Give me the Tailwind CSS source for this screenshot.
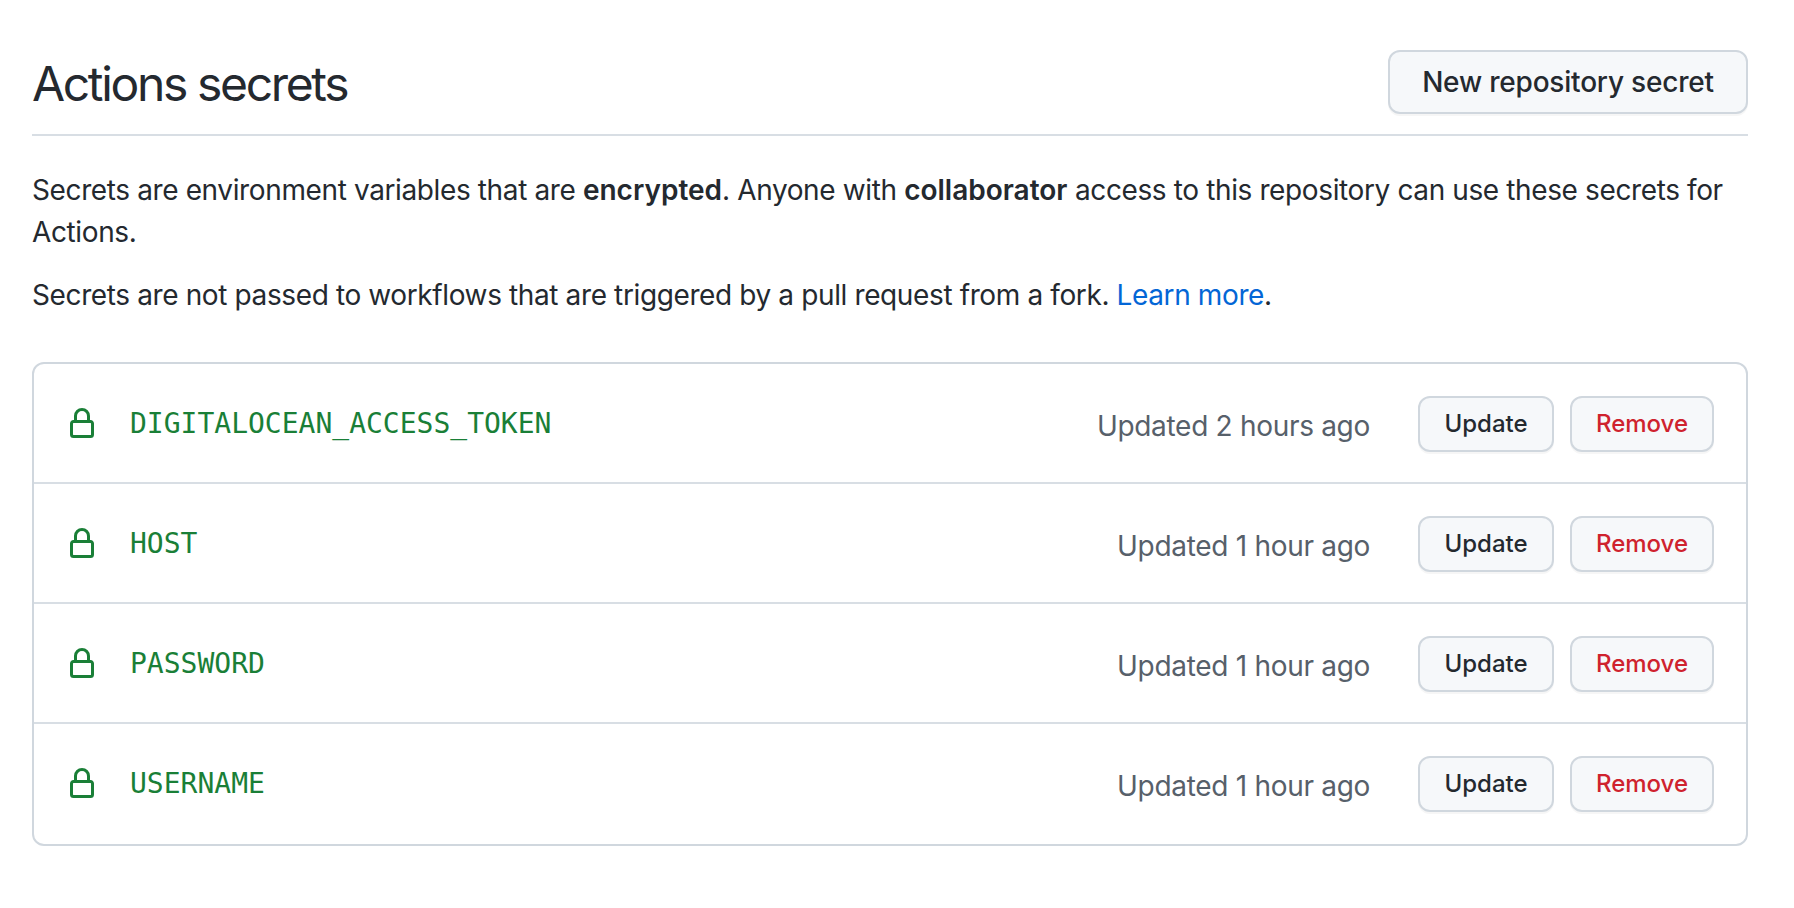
<!DOCTYPE html>
<html lang="en">

<head>
  <meta charset="UTF-8">
  <meta name="viewport" content="width=device-width, initial-scale=1.0">
  <title>Actions secrets</title>
  <script src="https://cdn.jsdelivr.net/npm/@tailwindcss/browser@4"></script>
</head>

<body class="min-h-screen bg-white text-[#24292f] font-['Inter','Liberation_Sans',sans-serif]">

  <div class="pl-[32px] pr-[46px] pt-[50px]">
    <!-- header -->
    <div class="flex justify-between items-start h-[86px] border-b-2 border-[#d8dee4]">
      <h1 class="text-[48px] leading-[68px] font-normal tracking-[-2.35px]">Actions secrets</h1>
      <button class="w-[360px] h-[64px] rounded-[12px] border-2 border-[#d0d7de] bg-[#f6f8fa] text-[28px] font-medium tracking-[-0.2px] shadow-[0_2px_0_rgba(27,31,36,0.04)]">New repository secret</button>
    </div>

    <p class="mt-[33px] text-[28px] leading-[42px] tracking-[-0.38px]">Secrets are environment variables that are <b class="font-semibold tracking-[0px]">encrypted</b>. Anyone with <b class="font-semibold tracking-[0px]">collaborator</b> access to this repository can use these secrets for Actions.</p>
    <p class="mt-[21px] text-[28px] leading-[42px] tracking-[-0.38px]">Secrets are not passed to workflows that are triggered by a pull request from a fork. <a href="#" class="text-[#0366d6]">Learn more</a>.</p>

    <!-- secrets list -->
    <div class="mt-[46px] rounded-[12px] border-2 border-[#d0d7de] divide-y-2 divide-[#d8dee4]">
      <div class="flex items-center pt-[32px] pb-[30px] px-[32px]">
        <svg class="w-[32px] h-[32px] text-[#1a7f37] shrink-0" viewBox="0 0 16 16" fill="currentColor"><path d="M4 4a4 4 0 0 1 8 0v2h.25c.966 0 1.75.784 1.75 1.75v5.5A1.75 1.75 0 0 1 12.25 15h-8.5A1.75 1.75 0 0 1 2 13.25v-5.5C2 6.784 2.784 6 3.75 6H4Zm6.5 2V4a2.5 2.5 0 1 0-5 0v2ZM3.5 7.75v5.5c0 .138.112.25.25.25h8.5a.25.25 0 0 0 .25-.25v-5.5a.25.25 0 0 0-.25-.25h-8.5a.25.25 0 0 0-.25.25Z"/></svg>
        <span class="ml-[32px] font-['DejaVu_Sans_Mono',monospace] text-[28px] text-[#1a7f37]">DIGITALOCEAN_ACCESS_TOKEN</span>
        <span class="ml-auto mr-[48px] text-[28px] text-[#57606a] mt-[4px] tracking-[-0.3px]">Updated 2 hours ago</span>
        <button class="w-[136px] h-[56px] rounded-[12px] border-2 border-[#d0d7de] bg-[#f6f8fa] text-[24px] font-medium shadow-[0_2px_0_rgba(27,31,36,0.04)]">Update</button>
        <button class="ml-[16px] w-[144px] h-[56px] rounded-[12px] border-2 border-[#d0d7de] bg-[#f6f8fa] text-[24px] font-medium text-[#cf222e] shadow-[0_2px_0_rgba(27,31,36,0.04)]">Remove</button>
      </div>
      <div class="flex items-center pt-[32px] pb-[30px] px-[32px]">
        <svg class="w-[32px] h-[32px] text-[#1a7f37] shrink-0" viewBox="0 0 16 16" fill="currentColor"><path d="M4 4a4 4 0 0 1 8 0v2h.25c.966 0 1.75.784 1.75 1.75v5.5A1.75 1.75 0 0 1 12.25 15h-8.5A1.75 1.75 0 0 1 2 13.25v-5.5C2 6.784 2.784 6 3.75 6H4Zm6.5 2V4a2.5 2.5 0 1 0-5 0v2ZM3.5 7.75v5.5c0 .138.112.25.25.25h8.5a.25.25 0 0 0 .25-.25v-5.5a.25.25 0 0 0-.25-.25h-8.5a.25.25 0 0 0-.25.25Z"/></svg>
        <span class="ml-[32px] font-['DejaVu_Sans_Mono',monospace] text-[28px] text-[#1a7f37]">HOST</span>
        <span class="ml-auto mr-[48px] text-[28px] text-[#57606a] mt-[4px] tracking-[-0.3px]">Updated 1 hour ago</span>
        <button class="w-[136px] h-[56px] rounded-[12px] border-2 border-[#d0d7de] bg-[#f6f8fa] text-[24px] font-medium shadow-[0_2px_0_rgba(27,31,36,0.04)]">Update</button>
        <button class="ml-[16px] w-[144px] h-[56px] rounded-[12px] border-2 border-[#d0d7de] bg-[#f6f8fa] text-[24px] font-medium text-[#cf222e] shadow-[0_2px_0_rgba(27,31,36,0.04)]">Remove</button>
      </div>
      <div class="flex items-center pt-[32px] pb-[30px] px-[32px]">
        <svg class="w-[32px] h-[32px] text-[#1a7f37] shrink-0" viewBox="0 0 16 16" fill="currentColor"><path d="M4 4a4 4 0 0 1 8 0v2h.25c.966 0 1.75.784 1.75 1.75v5.5A1.75 1.75 0 0 1 12.25 15h-8.5A1.75 1.75 0 0 1 2 13.25v-5.5C2 6.784 2.784 6 3.75 6H4Zm6.5 2V4a2.5 2.5 0 1 0-5 0v2ZM3.5 7.75v5.5c0 .138.112.25.25.25h8.5a.25.25 0 0 0 .25-.25v-5.5a.25.25 0 0 0-.25-.25h-8.5a.25.25 0 0 0-.25.25Z"/></svg>
        <span class="ml-[32px] font-['DejaVu_Sans_Mono',monospace] text-[28px] text-[#1a7f37]">PASSWORD</span>
        <span class="ml-auto mr-[48px] text-[28px] text-[#57606a] mt-[4px] tracking-[-0.3px]">Updated 1 hour ago</span>
        <button class="w-[136px] h-[56px] rounded-[12px] border-2 border-[#d0d7de] bg-[#f6f8fa] text-[24px] font-medium shadow-[0_2px_0_rgba(27,31,36,0.04)]">Update</button>
        <button class="ml-[16px] w-[144px] h-[56px] rounded-[12px] border-2 border-[#d0d7de] bg-[#f6f8fa] text-[24px] font-medium text-[#cf222e] shadow-[0_2px_0_rgba(27,31,36,0.04)]">Remove</button>
      </div>
      <div class="flex items-center pt-[32px] pb-[32px] px-[32px]">
        <svg class="w-[32px] h-[32px] text-[#1a7f37] shrink-0" viewBox="0 0 16 16" fill="currentColor"><path d="M4 4a4 4 0 0 1 8 0v2h.25c.966 0 1.75.784 1.75 1.75v5.5A1.75 1.75 0 0 1 12.25 15h-8.5A1.75 1.75 0 0 1 2 13.25v-5.5C2 6.784 2.784 6 3.75 6H4Zm6.5 2V4a2.5 2.5 0 1 0-5 0v2ZM3.5 7.75v5.5c0 .138.112.25.25.25h8.5a.25.25 0 0 0 .25-.25v-5.5a.25.25 0 0 0-.25-.25h-8.5a.25.25 0 0 0-.25.25Z"/></svg>
        <span class="ml-[32px] font-['DejaVu_Sans_Mono',monospace] text-[28px] text-[#1a7f37]">USERNAME</span>
        <span class="ml-auto mr-[48px] text-[28px] text-[#57606a] mt-[4px] tracking-[-0.3px]">Updated 1 hour ago</span>
        <button class="w-[136px] h-[56px] rounded-[12px] border-2 border-[#d0d7de] bg-[#f6f8fa] text-[24px] font-medium shadow-[0_2px_0_rgba(27,31,36,0.04)]">Update</button>
        <button class="ml-[16px] w-[144px] h-[56px] rounded-[12px] border-2 border-[#d0d7de] bg-[#f6f8fa] text-[24px] font-medium text-[#cf222e] shadow-[0_2px_0_rgba(27,31,36,0.04)]">Remove</button>
      </div>
    </div>
  </div>

</body>

</html>
